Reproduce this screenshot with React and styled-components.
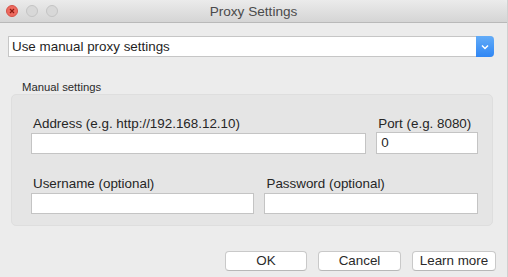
import styled, { createGlobalStyle } from 'styled-components';

const Global = createGlobalStyle`
  html, body {
    margin: 0;
    padding: 0;
    background: #ffffff;
  }
  * { box-sizing: border-box; }
`;

const Window = styled.div`
  width: 508px;
  height: 277px;
  background: #ececec;
  font-family: "Liberation Sans", Arial, sans-serif;
  color: #262626;
  display: flex;
  flex-direction: column;
  overflow: hidden;
  border-right: 1px solid #d0d0d0;
`;

const TitleBar = styled.div`
  height: 23px;
  flex: none;
  display: flex;
  align-items: center;
  position: relative;
  background: linear-gradient(#ebebeb, #d5d5d5);
  border-bottom: 1px solid #b9b9b9;
  border-top-right-radius: 5px;
  padding-left: 6px;
  gap: 8px;
`;

const Light = styled.span`
  width: 12px;
  height: 12px;
  border-radius: 50%;
  background: ${p => (p.$close ? '#ee6a5f' : '#d8d8d8')};
  border: 1px solid ${p => (p.$close ? '#d45248' : '#c4c4c4')};
  display: flex;
  align-items: center;
  justify-content: center;
`;

const Title = styled.div`
  position: absolute;
  left: 0;
  right: 0;
  top: 0;
  bottom: 0;
  display: flex;
  align-items: center;
  justify-content: center;
  font-size: 13.6px;
  color: #4b4b4b;
  pointer-events: none;
`;

const Body = styled.div`
  flex: 1;
  display: flex;
  flex-direction: column;
  padding: 13px 13px 0 8px;
`;

const Select = styled.div`
  height: 21px;
  display: flex;
  align-items: stretch;
  background: #fff;
  border: 1px solid #c6c6c6;
  border-right: none;
  border-radius: 0 4px 4px 0;
`;

const SelectText = styled.div`
  flex: 1;
  font-size: 13.4px;
  line-height: 19px;
  padding-left: 3px;
  color: #1f1f1f;
`;

const SelectButton = styled.div`
  width: 18px;
  margin: -1px 0;
  border-radius: 0 4px 4px 0;
  background: linear-gradient(#63acf8, #2f86f4);
  display: flex;
  align-items: center;
  justify-content: center;
`;

const GroupLabel = styled.div`
  font-size: 11.3px;
  color: #2a2a2a;
  margin: 23px 0 0 14px;
  height: 14px;
  line-height: 14px;
`;

const Group = styled.div`
  margin: 0 1px 0 3px;
  height: 132px;
  background: #e5e5e5;
  border: 1px solid #dedede;
  border-radius: 5px;
  padding: 21px 14px 0 19px;
  display: flex;
  flex-direction: column;
  gap: 22px;
`;

const Row = styled.div`
  display: flex;
  gap: 10px;
`;

const Field = styled.div`
  width: ${p => p.$w}px;
  display: flex;
  flex-direction: column;
`;

const Label = styled.div`
  font-size: 13.4px;
  line-height: 16px;
  height: 16px;
  padding-left: 2px;
  color: #262626;
  margin-bottom: ${p => (p.$tight ? 0 : 1)}px;
`;

const Input = styled.div`
  height: ${p => p.$h || 21}px;
  background: #fff;
  border: 1px solid #c4c4c4;
  font-size: 13.4px;
  line-height: 19px;
  padding-left: 4px;
  color: #1f1f1f;
`;

const Footer = styled.div`
  display: flex;
  justify-content: flex-end;
  gap: 11px;
  margin-top: 25px;
  margin-right: -2px;
`;

const Button = styled.div`
  width: ${p => p.$w}px;
  height: 20px;
  background: #fff;
  border: 1px solid #c9c9c9;
  border-bottom-color: #b8b8b8;
  border-radius: 4px;
  font-size: 13.4px;
  line-height: 18px;
  text-align: center;
  color: #2a2a2a;
`;

export default function App() {
  return (
    <>
      <Global />
      <Window>
        <TitleBar>
          <Light $close>
            <svg width="6" height="6" viewBox="0 0 6 6">
              <path d="M1 1L5 5M5 1L1 5" stroke="#8c1a10" strokeWidth="1.2" />
            </svg>
          </Light>
          <Light />
          <Light />
          <Title>Proxy Settings</Title>
        </TitleBar>
        <Body>
          <Select>
            <SelectText>Use manual proxy settings</SelectText>
            <SelectButton>
              <svg width="8" height="6" viewBox="0 0 8 6">
                <path d="M1 1.5L4 4.5L7 1.5" fill="none" stroke="#fff" strokeWidth="1.5" />
              </svg>
            </SelectButton>
          </Select>
          <GroupLabel>Manual settings</GroupLabel>
          <Group>
            <Row>
              <Field $w={336}>
                <Label>Address (e.g. http://192.168.12.10)</Label>
                <Input />
              </Field>
              <Field $w={102}>
                <Label $tight>Port (e.g. 8080)</Label>
                <Input $h={22}>0</Input>
              </Field>
            </Row>
            <Row>
              <Field $w={224}>
                <Label>Username (optional)</Label>
                <Input />
              </Field>
              <Field $w={214}>
                <Label>Password (optional)</Label>
                <Input />
              </Field>
            </Row>
          </Group>
          <Footer>
            <Button $w={82}>OK</Button>
            <Button $w={83}>Cancel</Button>
            <Button $w={84}>Learn more</Button>
          </Footer>
        </Body>
      </Window>
    </>
  );
}
